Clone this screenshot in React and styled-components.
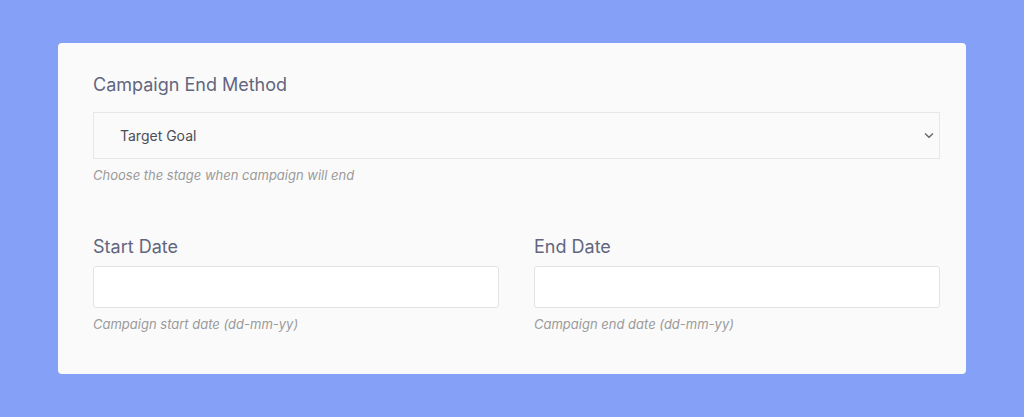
import React from "react";
import styled, { createGlobalStyle } from "styled-components";

const Global = createGlobalStyle`
  html, body {
    margin: 0;
    background: #84a0f7;
    font-family: Inter, "Noto Sans", sans-serif;
  }
`;

function App() {
  return (
    <Page>
      <Global />
      <Card>
        <Field>
          <Label gap={16}>Campaign End Method</Label>
          <SelectBox>
            <span>Target Goal</span>
            <svg width="10" height="7" viewBox="0 0 10 7">
              <path d="M1 1.5 L5 5.2 L9 1.5" fill="none" stroke="#666" strokeWidth="1.4" />
            </svg>
          </SelectBox>
          <Help>Choose the stage when campaign will end</Help>
        </Field>
        <Row>
          <Field>
            <Label gap={8}>Start Date</Label>
            <Input type="text" />
            <Help>Campaign start date (dd-mm-yy)</Help>
          </Field>
          <Field>
            <Label gap={8}>End Date</Label>
            <Input type="text" />
            <Help>Campaign end date (dd-mm-yy)</Help>
          </Field>
        </Row>
      </Card>
    </Page>
  );
}

const Page = styled.div`
  width: 1024px;
  height: 417px;
  padding: 43px 58px;
  box-sizing: border-box;
`;

const Card = styled.div`
  background: #fafafa;
  border-radius: 4px;
  height: 331px;
  box-sizing: border-box;
  padding: 31px 26px 0 35px;
`;

const Field = styled.div`
  display: flex;
  flex-direction: column;
  flex: 1;
`;

const Label = styled.div`
  font-size: 18px;
  line-height: 22px;
  color: #62667f;
  margin-bottom: ${(p) => p.gap}px;
`;

const SelectBox = styled.div`
  height: 47px;
  box-sizing: border-box;
  border: 1px solid #e7e7e7;
  background: #fafafa;
  display: flex;
  align-items: center;
  justify-content: space-between;
  padding: 0 5px 0 26px;
  font-size: 14px;
  color: #4b4d57;
`;

const Help = styled.div`
  font-size: 13px;
  line-height: 16px;
  font-style: italic;
  color: #9a9a9a;
  margin-top: 8px;
`;

const Row = styled.div`
  display: flex;
  gap: 35px;
  margin-top: 53px;
`;

const Input = styled.input`
  height: 42px;
  box-sizing: border-box;
  border: 1px solid #e3e3e3;
  border-radius: 3px;
  background: #fff;
  outline: none;
`;

export default App;
